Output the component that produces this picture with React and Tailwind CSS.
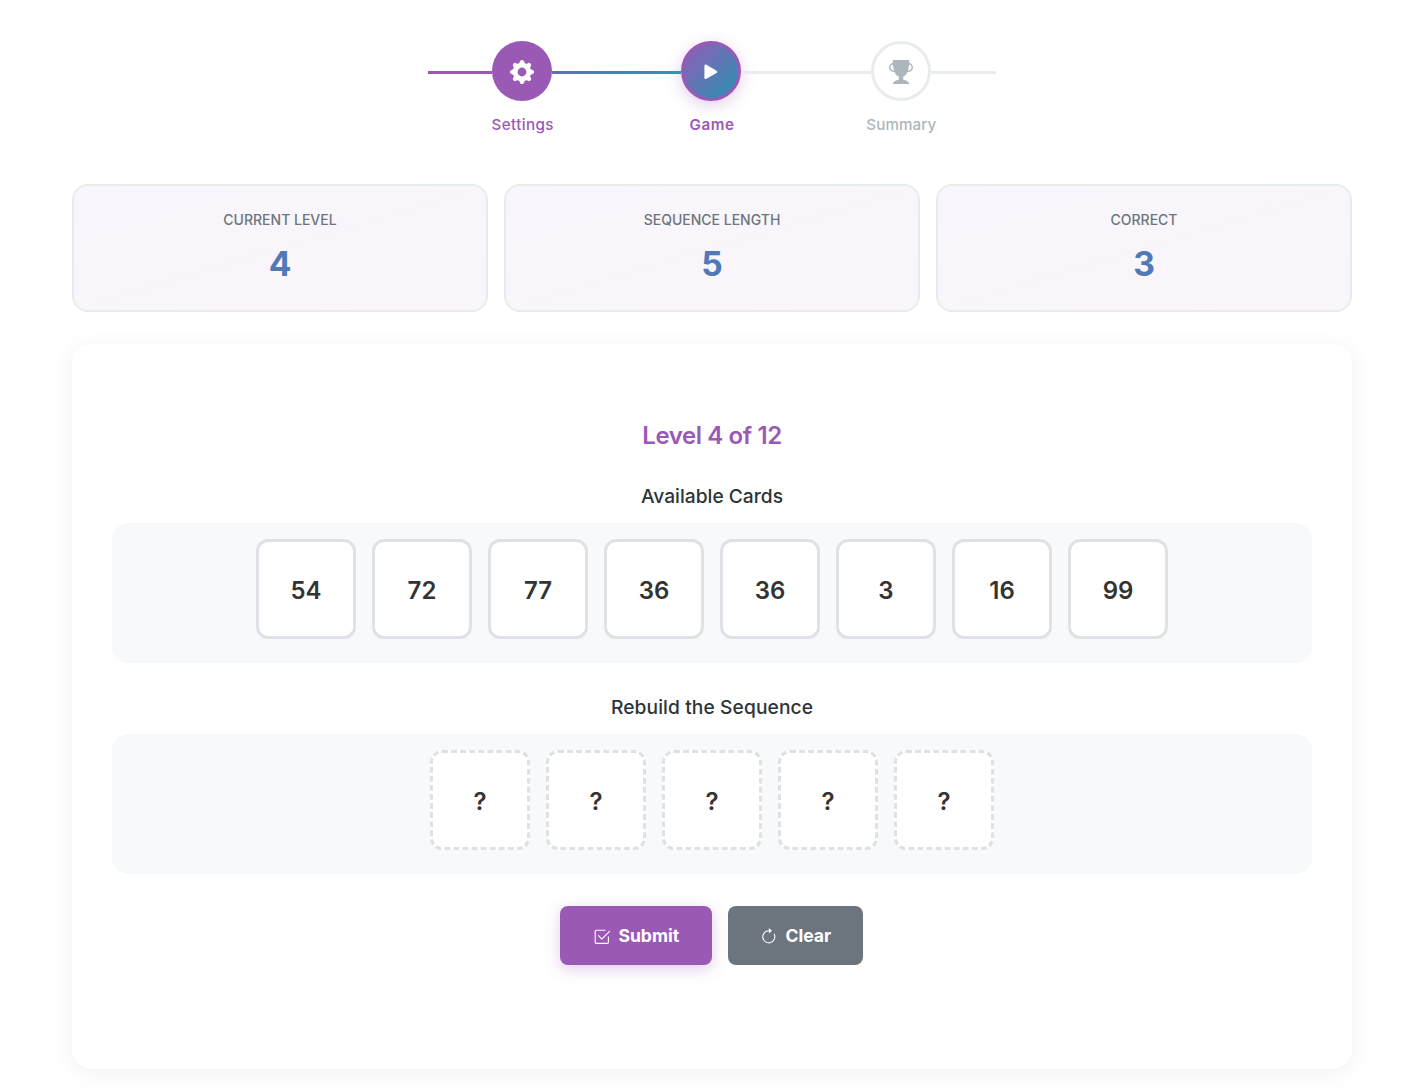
import React from "react";
import { BsGearFill, BsPlayFill, BsTrophyFill, BsCheck2Square, BsArrowClockwise } from "react-icons/bs";

function Line({ className }) {
  return <div className={"mt-[2px] h-[3px] " + className} />;
}

function Stat({ label, value }) {
  return (
    <div className="flex h-[128px] flex-col items-center rounded-2xl border-2 border-[#e6ece9] bg-linear-to-br/srgb from-[#f8f6fc] to-[#faf5fa] pt-[24px]">
      <div className="text-[14px] leading-[20px] font-medium text-[#6c757d]">{label}</div>
      <div className="mt-[10px] text-[33.6px] leading-[48px] font-bold text-[#5079b8]">{value}</div>
    </div>
  );
}

function Card({ children, dashed }) {
  return (
    <div
      className={
        "flex size-[100px] items-center justify-center rounded-xl border-[3px] border-[#dee2e6] bg-white pt-[4px] text-[24px] font-semibold text-[#333333] " +
        (dashed ? "border-dashed" : "")
      }
    >
      {children}
    </div>
  );
}

export default function App() {
  return (
    <div className="min-h-[1088px] overflow-hidden bg-white pl-[72px] font-['Inter',sans-serif]">
      <div className="w-[1280px] pb-[19px]">
        <div className="ml-[356px] w-[568px] pt-[41px]">
          <div className="flex items-center">
            <Line className="w-[64px] bg-[#9b59b6]" />
            <div className="flex size-[60px] items-center justify-center rounded-full bg-[#9b59b6] pt-[2px] text-[24px] text-white">
              <BsGearFill />
            </div>
            <Line className="w-[129px] bg-linear-to-r/srgb from-[#5f6fb1] to-[#2e96b5]" />
            <div className="flex size-[60px] items-center justify-center rounded-full border-[3px] border-[#9b59b6] bg-linear-to-br/srgb from-[#9b59b6] to-[#2196b5] bg-origin-border pt-[2px] text-[25.6px] text-white shadow-[0_4px_15px_rgba(155,89,182,0.3)]">
              <BsPlayFill />
            </div>
            <Line className="w-[130px] bg-[#e9ecef]" />
            <div className="flex size-[60px] items-center justify-center rounded-full border-[3px] border-[#e9ecef] bg-white pt-[2px] text-[24px] text-[#adb5bd]">
              <BsTrophyFill />
            </div>
            <Line className="w-[65px] bg-[#e9ecef]" />
          </div>
          <div className="mt-[12px] grid grid-cols-3 text-center text-[15.2px] leading-[23px] font-medium">
            <div className="tracking-[0.4px] text-[#9b59b6]">Settings</div>
            <div className="tracking-[0.6px] font-semibold text-[#9b59b6]">Game</div>
            <div className="tracking-[0.1px] text-[#adb5bd]">Summary</div>
          </div>
        </div>

        <div className="mt-[48px] grid grid-cols-3 gap-4">
          <Stat label="CURRENT LEVEL" value="4" />
          <Stat label="SEQUENCE LENGTH" value="5" />
          <Stat label="CORRECT" value="3" />
        </div>

        <div className="mt-8 flex h-[725px] flex-col items-center rounded-[20px] bg-white px-10 pt-[74px] shadow-[0_4px_24px_rgba(0,0,0,0.06)]">
          <h2 className="text-[24px] leading-[36px] font-semibold tracking-[-0.4px] text-[#9b59b6]">Level 4 of 12</h2>
          <h3 className="mt-[29px] text-[19.2px] leading-[27px] font-medium text-[#2d3436]">Available Cards</h3>
          <div className="mt-[13px] flex h-[140px] w-full items-start justify-center gap-4 rounded-2xl bg-[#f8f9fa] p-4">
            {[54, 72, 77, 36, 36, 3, 16, 99].map((n, i) => (
              <Card key={i}>{n}</Card>
            ))}
          </div>
          <h3 className="mt-[31px] text-[19.2px] leading-[27px] font-medium tracking-[0.1px] text-[#2d3436]">Rebuild the Sequence</h3>
          <div className="mt-[13px] flex h-[140px] w-full items-start justify-center gap-4 rounded-2xl bg-[#f8f9fa] p-4">
            {[0, 1, 2, 3, 4].map((i) => (
              <Card key={i} dashed>?</Card>
            ))}
          </div>
          <div className="mt-8 mr-[1px] flex gap-4">
            <button className="flex h-[59px] w-[152px] items-center justify-center gap-2 rounded-lg bg-[#9b59b6] pt-[2px] text-[17.6px] font-bold text-white shadow-[0_4px_15px_rgba(155,89,182,0.3)]">
              <BsCheck2Square />
              Submit
            </button>
            <button className="flex h-[59px] w-[135px] items-center justify-center gap-2 rounded-lg bg-[#6c757d] pt-[2px] text-[17.6px] font-bold text-white">
              <BsArrowClockwise />
              Clear
            </button>
          </div>
        </div>
      </div>
    </div>
  );
}
